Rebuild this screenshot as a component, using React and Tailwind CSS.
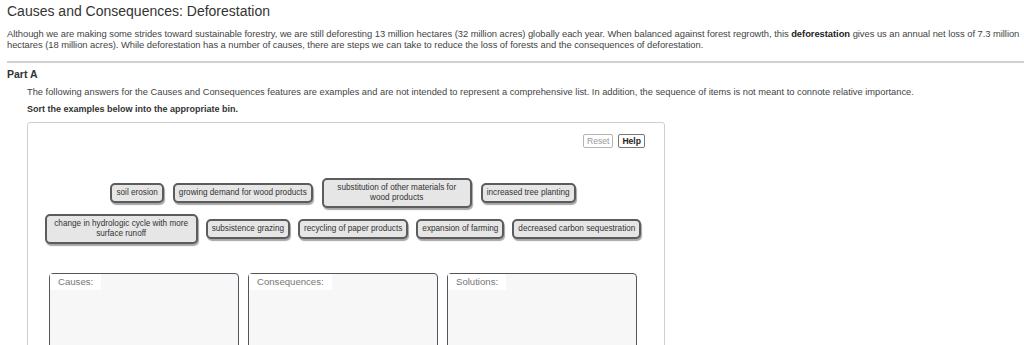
import React from 'react';

const row1 = [
  { label: 'soil erosion' },
  { label: 'growing demand for wood products' },
  { label: 'substitution of other materials for wood products', w: 'w-[150px]' },
  { label: 'increased tree planting' },
];

const row2 = [
  { label: 'change in hydrologic cycle with more surface runoff', w: 'w-[153px]' },
  { label: 'subsistence grazing' },
  { label: 'recycling of paper products' },
  { label: 'expansion of farming' },
  { label: 'decreased carbon sequestration' },
];

function Chip({ label, w }) {
  return (
    <div
      className={`${w || ''} bg-[#e6e6e6] border-2 border-[#5c5c5c] rounded-[5px] shadow-[1px_2px_1px_rgba(0,0,0,0.35)] px-[4px] py-[3px] text-[8.2px] leading-[10px] text-[#333] text-center`}
    >
      {label}
    </div>
  );
}

function Bin({ title }) {
  return (
    <div className="w-[190px] h-[90px] bg-[#f7f7f7] border-[1.5px] border-[#55555f] rounded-t-[4px]">
      <div className="w-fit h-[16px] bg-white pl-[8px] pr-[8px] text-[9.6px] leading-[16px] text-[#777]">
        {title}
      </div>
    </div>
  );
}

export default function App() {
  return (
    <div className="w-[1024px] h-[345px] overflow-hidden bg-white text-[#333] font-['Liberation_Sans',Arial,sans-serif]">
      {/* Header */}
      <div className="pl-[7px] pr-[2px] pt-[2px]">
        <h1 className="text-[14px] leading-[18px] text-[#333]">Causes and Consequences: Deforestation</h1>
        <p className="mt-[8px] text-[9.4px] leading-[11px] tracking-[-0.04px] text-[#444]">
          Although we are making some strides toward sustainable forestry, we are still deforesting 13 million hectares (32 million acres) globally each year. When balanced against forest regrowth, this{' '}
          <b className="text-[#222]">deforestation</b> gives us an annual net loss of 7.3 million hectares (18 million acres). While deforestation has a number of causes, there are steps we can take to reduce the loss of forests and the consequences of deforestation.
        </p>
      </div>

      <div className="ml-[7px] mt-[11px] border-t-2 border-[#d0d0d0]" />

      {/* Part A */}
      <div className="px-[7px]">
        <div className="mt-[4px] text-[10.5px] leading-[14px] font-bold text-[#333]">Part A</div>
        <div className="pl-[20px]">
          <p className="mt-[6px] text-[9.3px] leading-[11px] text-[#444]">
            The following answers for the Causes and Consequences features are examples and are not intended to represent a comprehensive list. In addition, the sequence of items is not meant to connote relative importance.
          </p>
          <p className="mt-[6px] text-[9px] leading-[11px] font-bold text-[#333]">Sort the examples below into the appropriate bin.</p>

          {/* Sorting box */}
          <div className="mt-[7px] w-[638px] h-[260px] border border-[#cfcfcf] rounded-[3px]">
            <div className="flex justify-end gap-[5px] pt-[11px] pr-[19px]">
              <button className="border border-[#b5b5b5] rounded-[2px] px-[3px] h-[14px] text-[8.6px] leading-[12px] text-[#999]">Reset</button>
              <button className="border border-[#777] rounded-[2px] px-[3px] h-[14px] text-[8.6px] leading-[12px] font-bold text-[#222]">Help</button>
            </div>

            <div className="mt-[30px] flex flex-col gap-[6px]">
              <div className="flex justify-center items-center gap-[9px] pr-[6px]">
                {row1.map((c) => (
                  <Chip key={c.label} {...c} />
                ))}
              </div>
              <div className="flex justify-center items-center gap-[8px] pr-[6px]">
                {row2.map((c) => (
                  <Chip key={c.label} {...c} />
                ))}
              </div>
            </div>

            <div className="mt-[29px] flex gap-[9px] pl-[21px]">
              <Bin title="Causes:" />
              <Bin title="Consequences:" />
              <Bin title="Solutions:" />
            </div>
          </div>
        </div>
      </div>
    </div>
  );
}
